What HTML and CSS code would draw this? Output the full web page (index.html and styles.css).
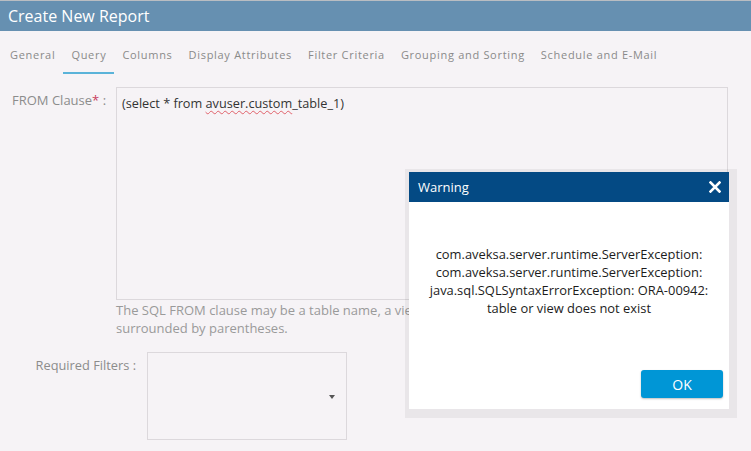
FILE: index.html
```html
<!DOCTYPE html>
<html>
<head>
<meta charset="utf-8">
<link rel="stylesheet" href="styles.css">
</head>
<body>
<div class="page">
  <header class="titlebar">Create New Report</header>
  <nav class="tabs">
    <span class="tab">General</span>
    <span class="tab active">Query</span>
    <span class="tab">Columns</span>
    <span class="tab">Display Attributes</span>
    <span class="tab">Filter Criteria</span>
    <span class="tab">Grouping and Sorting</span>
    <span class="tab">Schedule and E-Mail</span>
  </nav>
  <section class="form">
    <div class="row-from">
      <label class="label-from">FROM Clause<span class="req">*</span>&nbsp;:</label>
      <div class="field-from">
        <div class="textarea">(select * from <span class="spell">avuser.custom</span>_table_1)</div>
        <div class="help">The SQL FROM clause may be a table name, a view name,<br>surrounded by parentheses.</div>
      </div>
    </div>
    <div class="row-filters">
      <label class="label-filters">Required Filters :</label>
      <div class="select"><span class="caret"></span></div>
    </div>
  </section>

  <div class="dialog">
    <div class="dialog-head">
      <span class="dialog-title">Warning</span>
      <svg class="close" width="12" height="12" viewBox="0 0 12 12"><path d="M1.5 1.5 L10.5 10.5 M10.5 1.5 L1.5 10.5" stroke="#fff" stroke-width="2.6" stroke-linecap="square"/></svg>
    </div>
    <div class="dialog-body">
      <p class="message">com.aveksa.server.runtime.ServerException:<br>com.aveksa.server.runtime.ServerException:<br>java.sql.SQLSyntaxErrorException: ORA-00942:<br>table or view does not exist</p>
      <div class="dialog-foot"><button class="ok">OK</button></div>
    </div>
  </div>
</div>
</body>
</html>
```
FILE: styles.css
```css
html, body {
  margin: 0;
  padding: 0;
  background: #f6f3f6;
}
body {
  font-family: "Open Sans", "Noto Sans", sans-serif;
  width: 751px;
  height: 451px;
  overflow: hidden;
}
.page {
  position: relative;
  height: 451px;
  border-top: 1px solid #b9bdc2;
  box-sizing: border-box;
}
.titlebar {
  height: 30px;
  background: #6690b1;
  color: #fff;
  font-size: 16px;
  line-height: 30px;
  padding-left: 8px;
}
.tabs {
  display: flex;
  padding-left: 2px;
}
.tab {
  padding: 16px 8px 9px;
  line-height: 16px;
  font-size: 11px;
  letter-spacing: 0.7px;
  color: #8a8a8a;
  border-bottom: 2px solid transparent;
}
.tab.active {
  border-bottom-color: #5ab3d9;
}
.form {
  padding-top: 13px;
}
.row-from {
  display: flex;
  padding-left: 12px;
}
.label-from {
  width: 104px;
  font-size: 13px;
  color: #8c8c8c;
  line-height: 18px;
  padding-top: 4px;
  white-space: nowrap;
}
.req {
  color: #c8405e;
}
.field-from {
  width: 612px;
}
.textarea {
  height: 199px;
  border: 1px solid #dcd8dc;
  padding: 6px 5px;
  font-size: 12.7px;
  line-height: 18px;
  color: #333;
}
.spell {
  text-decoration: underline wavy #e0606a;
  text-decoration-thickness: 1px;
  text-underline-offset: 2px;
}
.help {
  font-size: 13px;
  line-height: 18px;
  color: #9a9a9a;
  padding-top: 1px;
  white-space: nowrap;
}
.row-filters {
  display: flex;
  margin-top: 15px;
}
.label-filters {
  width: 136px;
  text-align: right;
  font-size: 12.8px;
  line-height: 18px;
  color: #8c8c8c;
  padding-top: 4px;
  white-space: nowrap;
}
.select {
  margin-left: 11px;
  width: 200px;
  height: 88px;
  border: 1px solid #dcd8dc;
  display: flex;
  align-items: center;
  justify-content: flex-end;
  padding-right: 11px;
  box-sizing: border-box;
}
.caret {
  width: 0;
  height: 0;
  border-left: 3px solid transparent;
  border-right: 3px solid transparent;
  border-top: 4px solid #555;
  margin-top: 2px;
}
.dialog {
  position: absolute;
  left: 409px;
  top: 171px;
  width: 320px;
  height: 237px;
  background: #fff;
  box-shadow: 2px 3px 0 6px rgba(0,0,0,0.05);
  display: flex;
  flex-direction: column;
}
.dialog-head {
  height: 30px;
  background: #044a84;
  display: flex;
  align-items: center;
  justify-content: space-between;
  padding: 0 8px 0 9px;
}
.dialog-title {
  color: #fff;
  font-size: 13px;
}
.close {
  display: block;
}
.dialog-body {
  flex: 1;
  display: flex;
  flex-direction: column;
}
.message {
  margin: 43px 0 0;
  text-align: center;
  font-size: 12.9px;
  line-height: 18px;
  color: #1c1c1c;
}
.dialog-foot {
  margin-top: auto;
  display: flex;
  justify-content: flex-end;
  padding: 0 6px 11px 0;
}
.ok {
  width: 82px;
  height: 28px;
  border: none;
  border-radius: 3px;
  background: #0096d6;
  color: #fff;
  font-family: "Open Sans", sans-serif;
  font-size: 14px;
  box-shadow: 0 1px 2px rgba(0,0,0,0.25);
}
```
